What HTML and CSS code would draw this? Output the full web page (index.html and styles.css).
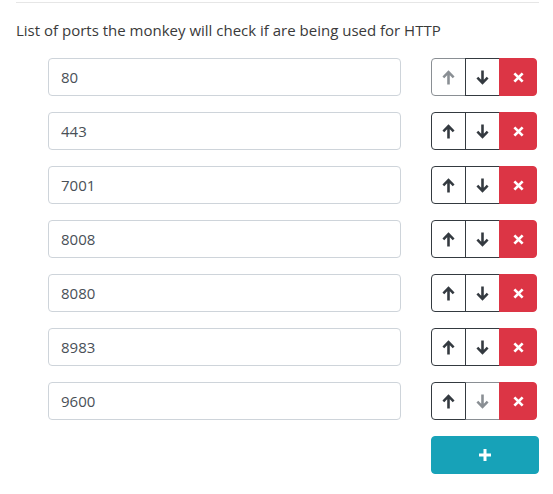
FILE: index.html
```html
<!DOCTYPE html>
<html lang="en">

<head>
  <meta charset="UTF-8">
  <meta name="viewport" content="width=device-width, initial-scale=1.0">
  <title>HTTP ports</title>
  <link rel="stylesheet" href="styles.css">
</head>

<body>
  <div class="configWrapper">
    <hr class="divider">
    <div class="fieldTitle">List of ports the monkey will check if are being used for HTTP</div>
    <div class="portList">
      <div class="portRow">
        <input class="portInput" type="text" value="80">
        <div class="btnGroup">
          <button class="btn btnMove disabled"><svg viewBox="0 0 12 14"><path d="M6 13.5V2M1.2 6.8L6 2l4.8 4.8"/></svg></button>
          <button class="btn btnMove"><svg viewBox="0 0 12 14"><path d="M6 0.5V12M1.2 7.2L6 12l4.8-4.8"/></svg></button>
          <button class="btn btnDelete"><svg viewBox="0 0 12 12"><path d="M1.5 1.5l9 9M10.5 1.5l-9 9"/></svg></button>
        </div>
      </div>
      <div class="portRow">
        <input class="portInput" type="text" value="443">
        <div class="btnGroup">
          <button class="btn btnMove"><svg viewBox="0 0 12 14"><path d="M6 13.5V2M1.2 6.8L6 2l4.8 4.8"/></svg></button>
          <button class="btn btnMove"><svg viewBox="0 0 12 14"><path d="M6 0.5V12M1.2 7.2L6 12l4.8-4.8"/></svg></button>
          <button class="btn btnDelete"><svg viewBox="0 0 12 12"><path d="M1.5 1.5l9 9M10.5 1.5l-9 9"/></svg></button>
        </div>
      </div>
      <div class="portRow">
        <input class="portInput" type="text" value="7001">
        <div class="btnGroup">
          <button class="btn btnMove"><svg viewBox="0 0 12 14"><path d="M6 13.5V2M1.2 6.8L6 2l4.8 4.8"/></svg></button>
          <button class="btn btnMove"><svg viewBox="0 0 12 14"><path d="M6 0.5V12M1.2 7.2L6 12l4.8-4.8"/></svg></button>
          <button class="btn btnDelete"><svg viewBox="0 0 12 12"><path d="M1.5 1.5l9 9M10.5 1.5l-9 9"/></svg></button>
        </div>
      </div>
      <div class="portRow">
        <input class="portInput" type="text" value="8008">
        <div class="btnGroup">
          <button class="btn btnMove"><svg viewBox="0 0 12 14"><path d="M6 13.5V2M1.2 6.8L6 2l4.8 4.8"/></svg></button>
          <button class="btn btnMove"><svg viewBox="0 0 12 14"><path d="M6 0.5V12M1.2 7.2L6 12l4.8-4.8"/></svg></button>
          <button class="btn btnDelete"><svg viewBox="0 0 12 12"><path d="M1.5 1.5l9 9M10.5 1.5l-9 9"/></svg></button>
        </div>
      </div>
      <div class="portRow">
        <input class="portInput" type="text" value="8080">
        <div class="btnGroup">
          <button class="btn btnMove"><svg viewBox="0 0 12 14"><path d="M6 13.5V2M1.2 6.8L6 2l4.8 4.8"/></svg></button>
          <button class="btn btnMove"><svg viewBox="0 0 12 14"><path d="M6 0.5V12M1.2 7.2L6 12l4.8-4.8"/></svg></button>
          <button class="btn btnDelete"><svg viewBox="0 0 12 12"><path d="M1.5 1.5l9 9M10.5 1.5l-9 9"/></svg></button>
        </div>
      </div>
      <div class="portRow">
        <input class="portInput" type="text" value="8983">
        <div class="btnGroup">
          <button class="btn btnMove"><svg viewBox="0 0 12 14"><path d="M6 13.5V2M1.2 6.8L6 2l4.8 4.8"/></svg></button>
          <button class="btn btnMove"><svg viewBox="0 0 12 14"><path d="M6 0.5V12M1.2 7.2L6 12l4.8-4.8"/></svg></button>
          <button class="btn btnDelete"><svg viewBox="0 0 12 12"><path d="M1.5 1.5l9 9M10.5 1.5l-9 9"/></svg></button>
        </div>
      </div>
      <div class="portRow">
        <input class="portInput" type="text" value="9600">
        <div class="btnGroup">
          <button class="btn btnMove"><svg viewBox="0 0 12 14"><path d="M6 13.5V2M1.2 6.8L6 2l4.8 4.8"/></svg></button>
          <button class="btn btnMove disabled"><svg viewBox="0 0 12 14"><path d="M6 0.5V12M1.2 7.2L6 12l4.8-4.8"/></svg></button>
          <button class="btn btnDelete"><svg viewBox="0 0 12 12"><path d="M1.5 1.5l9 9M10.5 1.5l-9 9"/></svg></button>
        </div>
      </div>
      <div class="addRow">
        <button class="btn btnAdd"><svg viewBox="0 0 12 12"><path d="M6 0v12M0 6h12"/></svg></button>
      </div>
    </div>
  </div>
</body>

</html>
```

FILE: styles.css
```css
* {
  box-sizing: border-box;
  padding: 0;
  margin: 0;
}

body {
  background: #fff;
  color: #212529;
  font-family: 'Open Sans', 'Noto Sans', sans-serif;
}

.configWrapper {
  padding: 2px 14px 0 16px;
}

.divider {
  border: 0;
  border-top: 1px solid #e6e6e6;
}

.fieldTitle {
  margin-top: 15px;
  font-size: 15px;
  line-height: 24px;
  color: #3a3a3a;
}

.portList {
  margin-top: 16px;
  padding-left: 32px;
}

.portRow {
  display: flex;
  align-items: center;
  margin-bottom: 16px;
}

.portInput {
  width: 353px;
  height: 38px;
  padding: 0 12px;
  border: 1px solid #ced4da;
  border-radius: 4px;
  font-family: inherit;
  font-size: 15px;
  color: #495057;
  background: #fff;
}

.btnGroup {
  display: flex;
  margin-left: 30px;
}

.btn {
  display: flex;
  align-items: center;
  justify-content: center;
  height: 38px;
  border: 1px solid #343a40;
  background: #fff;
}

.btn svg {
  flex: none;
  width: 13px;
  height: 15px;
  fill: none;
  stroke-width: 2.4;
}

.btnMove {
  width: 35px;
  margin-right: -1px;
}

.btnMove svg {
  stroke: #343a40;
}

.btnGroup .btn:first-child {
  border-radius: 4px 0 0 4px;
}

.btnMove.disabled {
  border-color: #8a8f94;
}

.btnMove.disabled svg {
  stroke: #8a8f94;
}

.btnGroup .btnMove + .btnMove.disabled {
  border-left-color: #343a40;
}

.btnDelete {
  width: 38px;
  border-color: #dc3545;
  background: #dc3545;
  border-radius: 0 4px 4px 0;
}

.btnDelete svg {
  width: 11px;
  height: 11px;
  stroke: #fff;
  stroke-width: 3;
}

.addRow {
  display: flex;
  justify-content: flex-end;
}

.btnAdd {
  width: 108px;
  border-color: #17a2b8;
  background: #17a2b8;
  border-radius: 4px;
}

.btnAdd svg {
  width: 12px;
  height: 12px;
  stroke: #fff;
  stroke-width: 3;
}
```
